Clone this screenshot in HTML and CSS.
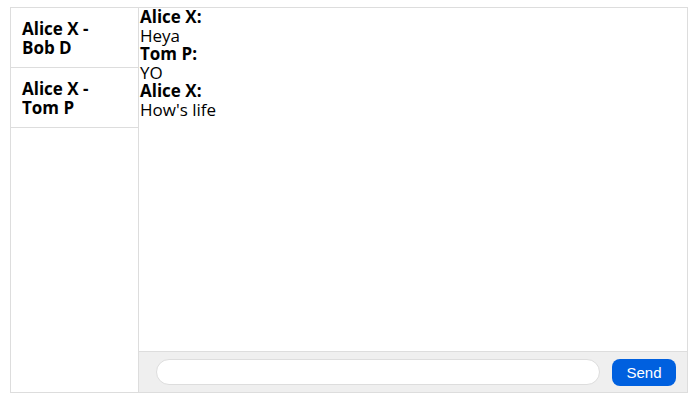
FILE: index.html
```html
<!DOCTYPE html>
<html>
<head>
<meta charset="utf-8">
<link rel="stylesheet" href="styles.css">
</head>
<body>
<div class="app">
  <aside class="sidebar">
    <div class="conv">Alice X - Bob D</div>
    <div class="conv">Alice X - Tom P</div>
  </aside>
  <main class="chat">
    <div class="messages">
      <div class="author">Alice X:</div>
      <div class="text">Heya</div>
      <div class="author">Tom P:</div>
      <div class="text">YO</div>
      <div class="author">Alice X:</div>
      <div class="text">How's life</div>
    </div>
    <form class="composer">
      <input class="input" type="text">
      <button class="send" type="button">Send</button>
    </form>
  </main>
</div>
</body>
</html>
```
FILE: styles.css
```css
html, body { background: #fff; }
body {
  margin: 7px 10px 10px 10px;
  font-family: "Open Sans", "DejaVu Sans", sans-serif;
  font-size: 17px;
  color: #000;
}
.app {
  display: flex;
  height: 386px;
  border: 1px solid #dddddd;
  box-sizing: border-box;
}
.sidebar {
  width: 127px;
  flex: none;
  border-right: 1px solid #dddddd;
}
.conv {
  height: 60px;
  box-sizing: border-box;
  padding: 11px 24px 11px 11px;
  border-bottom: 1px solid #dddddd;
  font-weight: 700;
  line-height: 19px;
  display: flex;
  align-items: center;
}
.chat {
  flex: 1;
  display: flex;
  flex-direction: column;
  min-width: 0;
}
.messages {
  flex: 1;
  padding: 0 1px;
  line-height: 18.5px;
}
.author { font-weight: 700; }
.composer {
  margin: 0;
  height: 40px;
  border-top: 1px solid #dddddd;
  background: #efefef;
  display: flex;
  align-items: center;
  padding: 0 11px 0 17px;
  gap: 12px;
}
.input {
  flex: 1;
  height: 26px;
  box-sizing: border-box;
  border: 1px solid #dddddd;
  border-radius: 13px;
  background: #fff;
  outline: none;
  margin: 0;
}
.send {
  width: 64px;
  height: 27px;
  border: none;
  border-radius: 8px;
  background: #0060df;
  color: #fff;
  font-family: "Liberation Sans", Arial, sans-serif;
  font-size: 15px;
  padding: 0;
  margin: 0;
}
```
